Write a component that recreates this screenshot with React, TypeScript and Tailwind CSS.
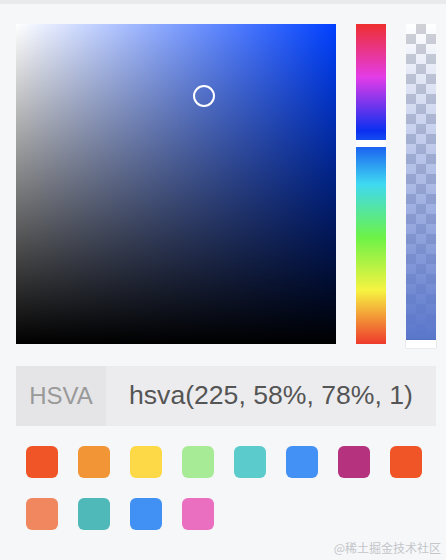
const swatches = [
  "#ef5527",
  "#f29536",
  "#fdd847",
  "#a8eb97",
  "#5ccbcb",
  "#4391f5",
  "#b5327e",
  "#ef5527",
  "#f0875f",
  "#4fb9b9",
  "#4191f4",
  "#ea6fc0",
];

export default function App() {
  return (
    <div className="relative h-[560px] w-[446px] overflow-hidden bg-[#f6f7f9] font-['Liberation_Sans',Arial,sans-serif]">
      <div className="h-1 bg-[#e9eaec]" />
      <div className="flex gap-5 pl-4 pr-[10px] pt-5">
        {/* saturation / value */}
        <div
          className="relative h-[320px] w-[320px] shrink-0"
          style={{ background: "hsl(225, 100%, 50%)" }}
        >
          <div className="absolute inset-0 bg-gradient-to-r from-white to-transparent" />
          <div className="absolute inset-0 bg-gradient-to-t from-black to-transparent" />
          <div className="absolute left-[177px] top-[61px] h-[22px] w-[22px] rounded-full border-2 border-white" />
        </div>

        {/* hue */}
        <div className="relative h-[320px] w-[30px] shrink-0 bg-[linear-gradient(to_bottom,#ee2f2f,#e33ce8,#0b2ff0,#3fd9f2,#6cf247,#f7f341,#ee3a2c)]">
          <div className="absolute left-0 right-0 top-[116px] h-[7px] bg-white" />
        </div>

        {/* alpha */}
        <div className="relative h-[316px] w-[30px] shrink-0 bg-white bg-[linear-gradient(45deg,#cfd1d6_25%,transparent_25%,transparent_75%,#cfd1d6_75%),linear-gradient(45deg,#cfd1d6_25%,transparent_25%,transparent_75%,#cfd1d6_75%)] bg-[length:20px_20px] bg-[position:0_0,10px_10px]">
          <div className="absolute inset-0 bg-gradient-to-b from-transparent to-[#5a76cb]" />
          <div className="absolute -bottom-[8px] left-0 right-0 h-[8px] bg-white shadow-[0_0_1px_rgba(0,0,0,0.3)]" />
        </div>
      </div>

      <div className="ml-4 mr-[10px] mt-[22px] flex h-[60px] bg-[#ececee]">
        <div className="flex w-[90px] items-center justify-center bg-[#e5e5e7] text-[24px] text-[#999]">
          HSVA
        </div>
        <div className="flex flex-1 items-center pl-[23px] text-[26.6px] text-[#555]">
          hsva(225, 58%, 78%, 1)
        </div>
      </div>

      <div className="ml-[26px] mt-5 grid w-[396px] grid-cols-8 gap-x-5 gap-y-5">
        {swatches.map((c, i) => (
          <div
            key={i}
            className="h-8 w-8 rounded-[6px]"
            style={{ background: c }}
          />
        ))}
      </div>

      <div className="absolute bottom-[3px] right-[5px] font-['Noto_Sans_CJK_SC',sans-serif] text-[12px] text-[#c4c6ca]">
        @稀土掘金技术社区
      </div>
    </div>
  );
}
